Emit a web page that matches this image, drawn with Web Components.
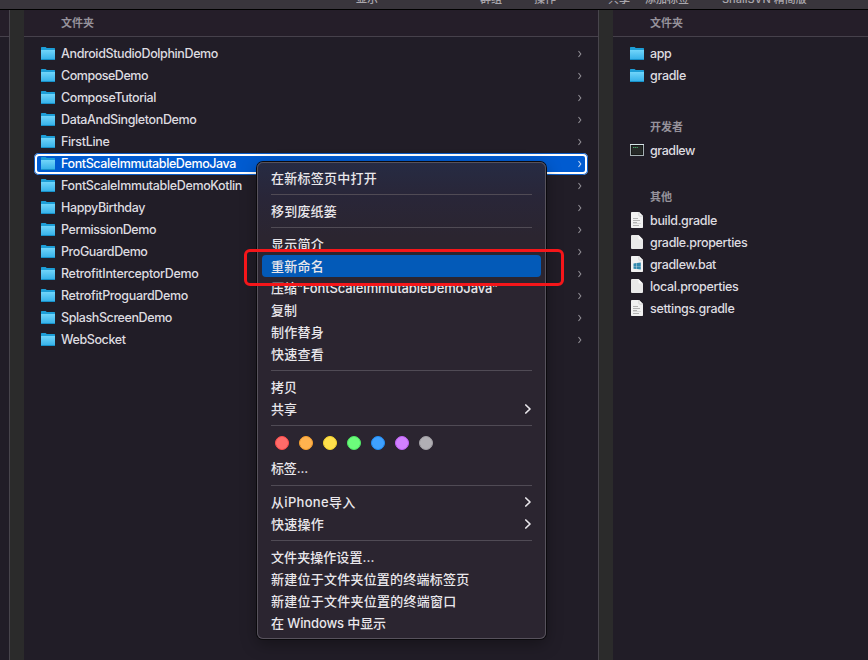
<!DOCTYPE html>
<html lang="zh-CN">
<head>
<meta charset="utf-8">
<title>Finder</title>
<style>
  body {
    margin: 0;
    width: 868px;
    height: 660px;
    overflow: hidden;
    background: #211d27;
    font: 12.5px/22px Inter, "Noto Sans CJK SC", sans-serif;
    color: #dedce0;
  }
</style>
</head>
<body>
<finder-window></finder-window>

<script>
/*
iconos de los archivos: folder, exec, text, blank, bat
*/
const icons = {
  folder: `
    <svg width="16" height="16" viewBox="0 0 16 16">
      <defs><linearGradient id="g" x1="0" y1="0" x2="0" y2="1">
        <stop offset="0" stop-color="#71d5fa"/><stop offset="1" stop-color="#32afe8"/>
      </linearGradient></defs>
      <path d="M1 1.7Q1 1 1.7 1H5.6L6.8 2H14.4Q15 2 15 2.7V6H1Z" fill="#1d9ed7"/>
      <path d="M1 4H15V13.4Q15 14 14.4 14H1.6Q1 14 1 13.4Z" fill="url(#g)"/>
      <path d="M1 12.9H15V13.4Q15 14 14.4 14H1.6Q1 14 1 13.4Z" fill="#1791ca"/>
    </svg>`,
  exec: `
    <svg width="16" height="16" viewBox="0 1 16 16">
      <rect x="1" y="2" width="14" height="12" fill="#a5b0b3"/>
      <path d="M1 2H15V3H1Z" fill="#d5e4e7"/>
      <rect x="2" y="3" width="12" height="10" fill="#171918"/>
      <rect x="3" y="4" width="10" height="8" fill="#262927"/>
      <path d="M4 5.5H9" stroke="#48a268" stroke-dasharray="1.3 .5"/>
    </svg>`,
  page: `
      <path d="M2 .7Q2 0 2.7 0H10L14 4V15.3Q14 16 13.3 16H2.7Q2 16 2 15.3Z" fill="#f1f1f1"/>
      <path d="M10 0L14 4H10.6Q10 4 10 3.4Z" fill="#fff" stroke="#b4b4b4" stroke-width=".6"/>`
};

icons.text = `<svg width="16" height="16" viewBox="0 0 16 16" style="margin-top:-1px">${icons.page}
  <path d="M4 6.5H9M4 8.5H11M4 10.5H8M4 13.5H10" stroke="#aaa" stroke-width=".9"/><path d="M4 11.5H12" stroke="#ccc" stroke-width=".7"/></svg>`;
icons.blank = `<svg width="16" height="16" viewBox="0 1 16 16">
  <path d="M2 2Q2 1 3 1H9.5L14 5.5V14Q14 15 13 15H3Q2 15 2 14Z" fill="#e9e9e9"/>
  <path d="M9.5 1L14 5.5H10.5Q9.5 5.5 9.5 4.5Z" fill="#fafafa"/></svg>`;
icons.bat = `<svg width="16" height="16" viewBox="0 0 16 16" style="margin-top:-1px">${icons.page}
  <path d="M4.5 7.4L7.6 7V9.9H4.5ZM8 6.9L11.8 6.4V9.9H8ZM4.5 10.3H7.6V13.1L4.5 12.7ZM8 10.3H11.8V13.6L8 13.1Z" fill="#3289ae"/></svg>`;

//Ajusta el espacio entre letras para que el texto ocupe el ancho pedido
const fitText = (element, span) => {
  const width = Number(element.getAttribute("fit"));
  if (!width) return;
  const current = span.getBoundingClientRect().width;
  span.style.letterSpacing = (width - current) / element.textContent.length + "px";
};

/*
file-row

atributos:
- icon
- selected
- arrow
- fit (ancho del texto)
*/
class FileRow extends HTMLElement {
  constructor() {
    super();
    this.attachShadow({ mode: "open" });
  }

  connectedCallback() {
    const icon = this.getAttribute("icon") || "folder";
    this.shadowRoot.innerHTML = `
      <style>
        :host {
          display: flex;
          align-items: center;
          box-sizing: border-box;
          height: 22px;
          margin: 0 10px;
          padding: 0 6px;
          white-space: nowrap;
          font-weight: 450;
        }
        :host([selected]) {
          background: #005bd0;
          color: #fff;
          font-weight: 500;
          border-radius: 5px;
          box-shadow: inset 0 0 0 1px #0a5bc4, inset 0 0 0 3px #fff;
        }
        .icon { flex: none; width: 16px; height: 16px; margin-right: 5px; }
        .icon svg { display: block; }
        .arrow { flex: none; width: 4px; height: 8px; margin-left: auto; }
      </style>
      <span class="icon">${icons[icon]}</span>
      <span class="label"><slot></slot></span>
      ${this.hasAttribute("arrow") ? `<svg class="arrow" viewBox="0 0 4 8" fill="none" stroke-width="1.1" stroke="${this.hasAttribute("selected") ? "#c4d8f5" : "#918e95"}"><path d="M.5 1L2.8 4L.5 7"/></svg>` : ""}
    `;
    fitText(this, this.shadowRoot.querySelector(".label"));
  }
}
customElements.define("file-row", FileRow);

/* group-title: título de cada grupo de una columna */
class GroupTitle extends HTMLElement {
  constructor() {
    super();
    this.attachShadow({ mode: "open" });
    this.shadowRoot.innerHTML = `
      <style>
        :host {
          display: block;
          padding-left: 37px;
          font-size: 11px;
          font-weight: 700;
          line-height: 26px;
          color: #96929b;
        }
        :host([first]) {
          background: #251e29;
          border-bottom: 1px solid #46414b;
          margin-bottom: 6px;
        }
      </style>
      <slot></slot>
    `;
  }
}
customElements.define("group-title", GroupTitle);

/* finder-column */
class FinderColumn extends HTMLElement {
  constructor() {
    super();
    this.attachShadow({ mode: "open" });
    this.shadowRoot.innerHTML = `
      <style>
        :host { display: block; box-sizing: border-box; overflow: hidden; background: #211d27; }
      </style>
      <slot></slot>
    `;
  }
}
customElements.define("finder-column", FinderColumn);

/*
menu-item

atributos:
- active
- submenu
- fit (ancho del texto)
*/
class MenuItem extends HTMLElement {
  constructor() {
    super();
    this.attachShadow({ mode: "open" });
  }

  connectedCallback() {
    this.shadowRoot.innerHTML = `
      <style>
        :host {
          display: flex;
          align-items: center;
          justify-content: space-between;
          height: 22px;
          margin: 0 5px;
          padding: 0 9px;
          border-radius: 4px;
          white-space: nowrap;
        }
        :host([active]) { background: #035ab8; }
      </style>
      <span><slot></slot></span>
      ${this.hasAttribute("submenu") ? `<svg width="8" height="12" viewBox="0 0 8 12" fill="none" stroke="#e9e7eb" stroke-width="1.7" stroke-linecap="round" stroke-linejoin="round"><path d="M1.8 2L6 6L1.8 10"/></svg>` : ""}
    `;
    fitText(this, this.shadowRoot.querySelector("span"));
  }
}
customElements.define("menu-item", MenuItem);

class MenuSeparator extends HTMLElement {
  constructor() {
    super();
    this.attachShadow({ mode: "open" });
    this.shadowRoot.innerHTML = `
      <style>
        :host { display: block; height: 1px; margin: 5px 14px; background: #504b55; }
      </style>
    `;
  }
}
customElements.define("menu-separator", MenuSeparator);

/* tag-colors: los círculos de las etiquetas */
class TagColors extends HTMLElement {
  constructor() {
    super();
    this.attachShadow({ mode: "open" });
    const colors = [
      ["#ff6b69", "#ff4c4b"], ["#ffb34f", "#f9a12d"], ["#ffe04c", "#f6d52c"], ["#6cfc7b", "#4ee965"],
      ["#3fa1ff", "#1f8cf5"], ["#d180ff", "#c062f7"], ["#b1afb4", "#a19fa4"]
    ];
    this.shadowRoot.innerHTML = `
      <style>
        :host { display: flex; gap: 10px; height: 21px; padding: 5px 18px 0; }
        i { box-sizing: border-box; width: 14px; height: 14px; border-radius: 50%; border: 1px solid; }
      </style>
      ${colors.map(([fill, edge]) => `<i style="background:${fill};border-color:${edge}"></i>`).join("")}
    `;
  }
}
customElements.define("tag-colors", TagColors);

/* context-menu */
class ContextMenu extends HTMLElement {
  constructor() {
    super();
    this.attachShadow({ mode: "open" });
    this.shadowRoot.innerHTML = `
      <style>
        :host {
          display: block;
          box-sizing: border-box;
          width: 289px;
          height: 477px;
          padding-top: 5px;
          border-radius: 6px;
          background: linear-gradient(#262b43, #292638 35px, #2b2530 75px);
          box-shadow: inset 0 0 0 1px #57525c, 0 0 0 1px #0b0a0d, 0 5px 16px rgba(0, 0, 0, .35);
          font-size: 13px;
          font-weight: 500;
          color: #e9e7eb;
        }
      </style>
      <slot></slot>
    `;
  }
}
customElements.define("context-menu", ContextMenu);

/* tool-bar: la parte de abajo de la barra, con los textos de los botones */
class ToolBar extends HTMLElement {
  constructor() {
    super();
    this.attachShadow({ mode: "open" });
    this.shadowRoot.innerHTML = `
      <style>
        :host {
          display: flex;
          align-items: flex-end;
          box-sizing: border-box;
          height: 10px;
          padding: 0 0 2px 356px;
          overflow: hidden;
          background: #39353c;
          border-bottom: 1px solid #000;
          font-size: 11px;
          font-weight: 500;
          line-height: 16px;
          color: #aaa7ad;
          white-space: nowrap;
        }
        span { flex: none; }
      </style>
      <span style="width:124px">显示</span>
      <span style="width:54px">群组</span>
      <span style="width:74px">操作</span>
      <span style="width:37px">共享</span>
      <span style="width:77px">添加标签</span>
      <span>ShallSVN 精简版</span>
    `;
  }
}
customElements.define("tool-bar", ToolBar);

const windowTemplate = document.createElement("template");

windowTemplate.innerHTML = `
<style>
  :host { display: block; position: relative; width: 868px; height: 660px; overflow: hidden; }

  .columns {
    display: grid;
    grid-template-columns: 9px 15px 574px 15px 1fr;
    height: 650px;
  }

  .divider { background: #2b2b2b; border-left: 1px solid #48454c; }

  context-menu { position: absolute; left: 257px; top: 162px; }

  .mark {
    position: absolute;
    left: 244px;
    top: 249px;
    box-sizing: border-box;
    width: 320px;
    height: 37px;
    border: 3px solid #f5161a;
    border-radius: 6px;
  }
</style>

<tool-bar></tool-bar>
<div class="columns">
  <finder-column><group-title first>&nbsp;</group-title></finder-column>
  <div class="divider"></div>
  <finder-column class="projects"><group-title first>文件夹</group-title></finder-column>
  <div class="divider"></div>
  <finder-column>
    <group-title first>文件夹</group-title>
    <file-row fit="21.5">app</file-row>
    <file-row fit="36">gradle</file-row>
    <group-title style="padding-top:27px">开发者</group-title>
    <file-row icon="exec" fit="45">gradlew</file-row>
    <group-title style="padding-top:22px">其他</group-title>
    <file-row icon="text" fit="67">build.gradle</file-row>
    <file-row icon="blank" fit="97.5">gradle.properties</file-row>
    <file-row icon="bat" fit="66">gradlew.bat</file-row>
    <file-row icon="blank" fit="88.5">local.properties</file-row>
    <file-row icon="text" fit="84.5">settings.gradle</file-row>
  </finder-column>
</div>

<context-menu>
  <menu-item fit="106">在新标签页中打开</menu-item>
  <menu-separator></menu-separator>
  <menu-item fit="66">移到废纸篓</menu-item>
  <menu-separator></menu-separator>
  <menu-item fit="53">显示简介</menu-item>
  <menu-item active fit="53">重新命名</menu-item>
  <menu-item fit="227">压缩“FontScaleImmutableDemoJava”</menu-item>
  <menu-item>复制</menu-item>
  <menu-item fit="53">制作替身</menu-item>
  <menu-item fit="53">快速查看</menu-item>
  <menu-separator></menu-separator>
  <menu-item>拷贝</menu-item>
  <menu-item submenu>共享</menu-item>
  <menu-separator></menu-separator>
  <tag-colors></tag-colors>
  <menu-item style="margin-bottom:6px" fit="37">标签...</menu-item>
  <menu-separator></menu-separator>
  <menu-item submenu fit="84.5">从iPhone导入</menu-item>
  <menu-item submenu fit="53">快速操作</menu-item>
  <menu-separator></menu-separator>
  <menu-item fit="103.5">文件夹操作设置...</menu-item>
  <menu-item fit="198.5">新建位于文件夹位置的终端标签页</menu-item>
  <menu-item fit="185.5">新建位于文件夹位置的终端窗口</menu-item>
  <menu-item fit="115">在 Windows 中显示</menu-item>
</context-menu>
<div class="mark"></div>
`;

class FinderWindow extends HTMLElement {
  constructor() {
    super();
    this.attachShadow({ mode: "open" });
  }

  connectedCallback() {
    this.shadowRoot.appendChild(windowTemplate.content.cloneNode(true));

    const projects = {
      AndroidStudioDolphinDemo: 157,
      ComposeDemo: 87,
      ComposeTutorial: 95,
      DataAndSingletonDemo: 135.5,
      FirstLine: 48.5,
      FontScaleImmutableDemoJava: 175,
      FontScaleImmutableDemoKotlin: 181,
      HappyBirthday: 84,
      PermissionDemo: 95,
      ProGuardDemo: 86.5,
      RetrofitInterceptorDemo: 137.5,
      RetrofitProguardDemo: 127,
      SplashScreenDemo: 111,
      WebSocket: 64.5
    };
    const column = this.shadowRoot.querySelector(".projects");

    Object.entries(projects).forEach(([name, width]) => {
      const row = document.createElement("file-row");
      row.textContent = name;
      row.setAttribute("arrow", "");
      row.setAttribute("fit", width);
      if (name === "FontScaleImmutableDemoJava") row.setAttribute("selected", "");
      column.appendChild(row);
    });
  }
}
customElements.define("finder-window", FinderWindow);
</script>
</body>
</html>
